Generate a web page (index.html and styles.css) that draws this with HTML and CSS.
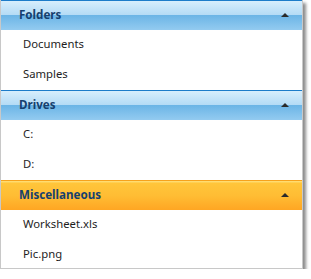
FILE: index.html
```html
<!DOCTYPE html>
<html>
<head>
<meta charset="utf-8">
<link rel="stylesheet" href="styles.css">
</head>
<body>
<div class="panel">
  <div class="group">
    <div class="header blue"><span class="title">Folders</span><span class="arrow"></span></div>
    <div class="item">Documents</div>
    <div class="item">Samples</div>
  </div>
  <div class="group">
    <div class="header blue"><span class="title">Drives</span><span class="arrow"></span></div>
    <div class="item">C:</div>
    <div class="item">D:</div>
  </div>
  <div class="group">
    <div class="header orange"><span class="title">Miscellaneous</span><span class="arrow"></span></div>
    <div class="item">Worksheet.xls</div>
    <div class="item">Pic.png</div>
  </div>
</div>
</body>
</html>
```
FILE: styles.css
```css
html, body {
  margin: 0;
  padding: 0;
  background: #ffffff;
}
body {
  font-family: "Noto Sans", "DejaVu Sans", sans-serif;
  font-size: 11.3px;
}
.panel {
  width: 301px;
  height: 268px;
  border: 1px solid #c8c8c8;
  border-top: none;
  background: #ffffff;
  box-shadow: 3px 3px 3px rgba(0,0,0,0.45);
  display: flex;
  flex-direction: column;
}
.header {
  box-sizing: border-box;
  height: 30px;
  border-top: 1px solid #1c7cc9;
  display: flex;
  align-items: center;
  justify-content: space-between;
  padding: 0 13px 2px 18px;
  font-weight: bold;
  font-size: 11.6px;
  color: #15406e;
}
.header.blue {
  background: linear-gradient(to bottom, #d6eefc 0%, #b4dbf5 48%, #6cb5e6 50%, #93cbf0 100%);
}
.header.orange {
  border-top: 1px solid #f6a21c;
  background: linear-gradient(to bottom, #ffe27f 0%, #ffc53a 8%, #ffbd34 50%, #ffa623 100%);
}
.arrow {
  width: 0;
  height: 0;
  border-left: 4px solid transparent;
  border-right: 4px solid transparent;
  border-bottom: 4px solid #2a2a2a;
  margin-top: 1px;
}
.item {
  height: 30px;
  box-sizing: border-box;
  display: flex;
  align-items: center;
  padding: 0 0 3px 22px;
  color: #1e1e1e;
}
```
